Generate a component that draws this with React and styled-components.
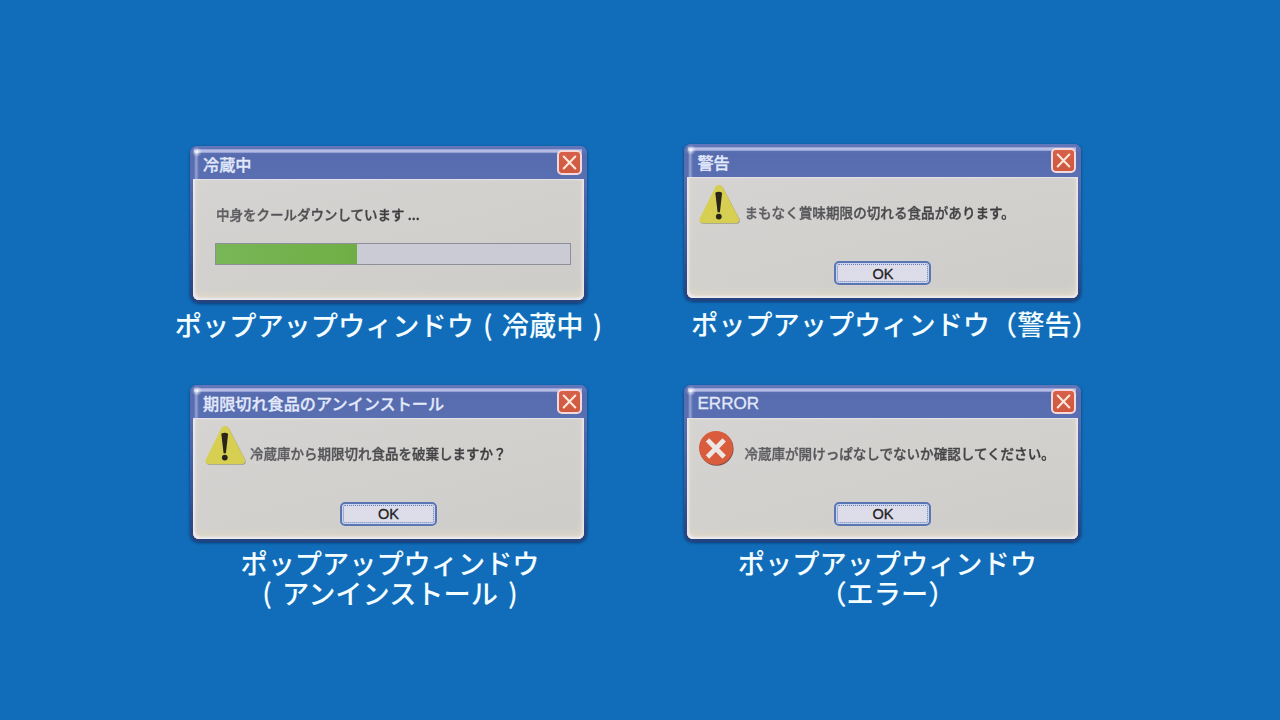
import React from "react";
import styled, { createGlobalStyle } from "styled-components";

const GlobalStyle = createGlobalStyle`
  * { box-sizing: border-box; }
  body {
    margin: 0;
    background: #116db9;
    font-family: "Liberation Sans", "Noto Sans CJK JP", sans-serif;
  }
`;

const Desktop = styled.main`
  width: 1280px;
  height: 720px;
  overflow: hidden;
  background: #116db9;
  display: grid;
  grid-template-columns: 397px 397px;
  grid-template-rows: 239px 240px;
  column-gap: 97.4px;
  padding: 145.6px 0 0 190px;
`;

const Item = styled.figure`
  margin: ${(p) => p.$lift || 0}px 0 0;
  display: flex;
  flex-direction: column;
  align-items: center;
`;

const Frame = styled.section`
  width: 397px;
  height: 157px;
  flex: none;
  display: flex;
  flex-direction: column;
  padding: 0 3px 3px;
  border-radius: 7px 7px 9px 9px;
  background: linear-gradient(#5c6fb4 0, #586db0 34px, #3a5b9f 60%, #23437f 100%);
  box-shadow: 0 1px 3px rgba(8, 40, 95, 0.75);
`;

const TitleBar = styled.header`
  height: 33px;
  flex: none;
  display: flex;
  align-items: flex-start;
  justify-content: space-between;
  margin: 0 -3px;
  padding: 4px 5px 0 13px;
  border-radius: 7px 7px 0 0;
  background:
    radial-gradient(circle at 7px 6px, #fff 0, rgba(255, 255, 255, 0.45) 2px, rgba(255, 255, 255, 0) 5px),
    linear-gradient(90deg, transparent 4px, rgba(205, 210, 245, 0.55) 6px, transparent 9px) 0 5px no-repeat,
    linear-gradient(transparent 2.5px, #b4bce6 4px, #b4bce6 6px, transparent 7.5px) 4px 0 / 388px 100% no-repeat,
    linear-gradient(#6577bb, #566cae 10px, #596fb1);
`;

const Title = styled.h2`
  margin: 1px 0 0;
  font-size: ${(p) => (p.$latin ? 17.1 : 16.15)}px;
  line-height: 28px;
  font-weight: 500;
  color: #e2e9fb;
  -webkit-text-stroke: 0.3px #e2e9fb;
  white-space: nowrap;
`;

const CloseButton = styled.button`
  width: 25px;
  height: 25px;
  padding: 0;
  display: grid;
  place-items: center;
  border: 2px solid #f2d9dc;
  border-radius: 5px;
  background: linear-gradient(#d6604a, #cf583f);
  svg { display: block; }
`;

const Body = styled.div`
  flex: 1;
  display: flex;
  flex-direction: column;
  border-radius: 0 0 6px 6px;
  background: linear-gradient(165deg, #d5d4d2, #cdccc9);
  box-shadow:
    inset 0 1px 1px #e4e3ec,
    inset 2px -2px 2px #eeeaee,
    inset -2px -1px 2px #e8e4e8,
    inset 0 -5px 10px #e2dac8;
`;

const MessageRow = styled.div`
  height: 84px;
  display: flex;
  align-items: flex-start;
  padding-left: 12px;
`;

const IconSlot = styled.span`
  width: 45px;
  flex: none;
  padding-top: ${(p) => p.$top}px;
  svg { display: block; }
`;

const Message = styled.p`
  margin: ${(p) => p.$top}px 0 0;
  width: max-content;
  font-family: "Noto Sans CJK JP", sans-serif;
  font-size: ${(p) => p.$size || 13.55}px;
  line-height: 20px;
  font-weight: 500;
  white-space: nowrap;
  color: transparent;
  -webkit-text-stroke: 0.35px transparent;
  background: linear-gradient(90deg, #606064, #363537);
  background-clip: text;
`;

const OkButton = styled.button`
  align-self: center;
  width: 97px;
  height: 24px;
  padding: 1px;
  border: 2px solid #5975b2;
  border-radius: 5px;
  background: #ccd5ed;
  box-shadow: 0 0 1px #e5e8f4;
`;

const OkFace = styled.span`
  display: flex;
  align-items: center;
  justify-content: center;
  height: 100%;
  border: 1px dotted #647fb8;
  border-radius: 2px;
  background: #dcdde8;
  font: 14.5px "Liberation Sans", sans-serif;
  color: #252326;
  -webkit-text-stroke: 0.35px #252326;
  padding-top: 1px;
`;

const CoolingPanel = styled.div`
  padding: 0 13px 0 21.5px;
`;

const CoolingMessage = styled(Message)`
  margin-left: 1.5px;
`;

const Track = styled.div`
  height: 22px;
  margin-top: 19px;
  border: 1.5px solid #8d909b;
  background: #cacbd5;
`;

const Fill = styled.div`
  height: 100%;
  background: linear-gradient(90deg, #78b657, #70ae45);
`;

const Caption = styled.figcaption`
  margin: ${(p) => p.$top}px 0 0 ${(p) => p.$shift || 0}px;
  font-family: "Noto Sans CJK JP", sans-serif;
  font-size: 27.2px;
  line-height: 29.5px;
  font-weight: 500;
  color: #f4fdff;
  white-space: nowrap;
  text-align: center;
  word-spacing: ${(p) => p.$space || 0}px;
`;

const Line = styled.span`
  display: block;
`;

function CloseIcon() {
  return (
    <svg width="17" height="17" viewBox="0 0 17 17" fill="none" stroke="#fae7dc" strokeWidth="2.1" strokeLinecap="round">
      <path d="M2.7 2.5 14.3 14.5M14.3 2.5 2.7 14.5" />
    </svg>
  );
}

function WarningIcon() {
  return (
    <svg width="42" height="41" viewBox="0 0 42 41">
      <path d="M16.6 3.2Q20.2-1.4 23.8 3.2L39.7 33.8Q41.5 38.9 37 39H4Q-.8 38.8 1.2 34Z" fill="#8d8b68" transform="translate(.5 .7)" opacity=".75" />
      <path d="M16.4 3Q20-1.4 23.6 3L39.5 33.8Q41.3 38.9 36.8 39H3.8Q-1 38.8 1 34Z" fill="#d6cf51" />
      <path d="M16.3 8.7Q19.7 6.9 23.1 8.7L20.9 28.2H18.6Z" fill="#29251b" />
      <circle cx="19.8" cy="32.6" r="2.9" fill="#29251b" />
    </svg>
  );
}

function ErrorIcon() {
  return (
    <svg width="36" height="37" viewBox="0 0 36 37">
      <circle cx="17.6" cy="18.8" r="17" fill="#7c4a42" />
      <circle cx="17" cy="17.9" r="17" fill="#d95c3d" />
      <path d="M8.5 9.9 25.2 27M25.2 9.9 8.5 27" stroke="#ece7e5" strokeWidth="4.8" />
    </svg>
  );
}

function PopupWindow({ title, latin, children }) {
  return (
    <Frame>
      <TitleBar>
        <Title $latin={latin}>{title}</Title>
        <CloseButton aria-label="閉じる"><CloseIcon /></CloseButton>
      </TitleBar>
      <Body>{children}</Body>
    </Frame>
  );
}

function Alert({ icon, iconTop, text, size, textTop = 25 }) {
  return (
    <>
      <MessageRow>
        <IconSlot $top={iconTop}>{icon}</IconSlot>
        <Message $top={textTop} $size={size}>{text}</Message>
      </MessageRow>
      <OkButton><OkFace>OK</OkFace></OkButton>
    </>
  );
}

export default function App() {
  return (
    <>
      <GlobalStyle />
      <Desktop>
        <Item>
          <PopupWindow title="冷蔵中">
            <CoolingPanel>
              <CoolingMessage $top={25.4} $size={13.5}>中身をクールダウンしています ...</CoolingMessage>
              <Track><Fill style={{ width: "39.8%" }} /></Track>
            </CoolingPanel>
          </PopupWindow>
          <Caption $top={7.5} $space={3}>ポップアップウィンドウ ( 冷蔵中 )</Caption>
        </Item>
        <Item $lift={-1.6}>
          <PopupWindow title="警告">
            <Alert icon={<WarningIcon />} iconTop={7} text="まもなく賞味期限の切れる食品があります。" size={13.6} />
          </PopupWindow>
          <Caption $top={8.4} $shift={24}>ポップアップウィンドウ（警告）</Caption>
        </Item>
        <Item>
          <PopupWindow title="期限切れ食品のアンインストール">
            <Alert icon={<WarningIcon />} iconTop={7} text="冷蔵庫から期限切れ食品を破棄しますか？" size={13.5} />
          </PopupWindow>
          <Caption $top={6.9} $shift={3} $space={4}>
            <Line>ポップアップウィンドウ</Line>
            <Line>( アンインストール )</Line>
          </Caption>
        </Item>
        <Item>
          <PopupWindow title="ERROR" latin>
            <Alert icon={<ErrorIcon />} iconTop={12} text="冷蔵庫が開けっぱなしでないか確認してください。" />
          </PopupWindow>
          <Caption $top={6.9} $shift={9}>
            <Line>ポップアップウィンドウ</Line>
            <Line>（エラー）</Line>
          </Caption>
        </Item>
      </Desktop>
    </>
  );
}
